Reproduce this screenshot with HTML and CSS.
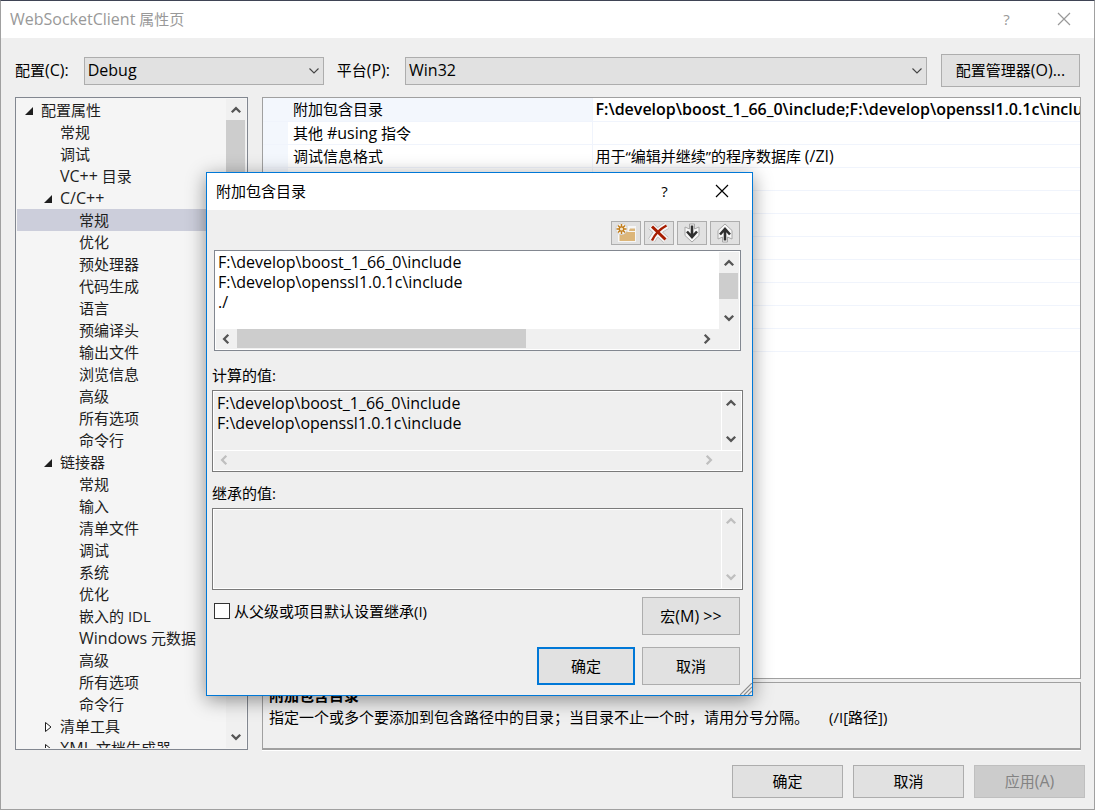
FILE: index.html
```html
<!DOCTYPE html>
<html lang="zh-CN">
<head>
<meta charset="utf-8">
<title>WebSocketClient 属性页</title>
<link rel="stylesheet" href="styles.css">
</head>
<body>
<svg class="defs" width="0" height="0" aria-hidden="true">
  <symbol id="i-up" viewBox="0 0 12 12"><path d="M1.800 8.300 6 4.100 10.200 8.300" fill="none" stroke="currentColor" stroke-width="2.300"/></symbol>
  <symbol id="i-down" viewBox="0 0 12 12"><path d="M1.800 3.700 6 7.900 10.200 3.700" fill="none" stroke="currentColor" stroke-width="2.300"/></symbol>
  <symbol id="i-left" viewBox="0 0 12 12"><path d="M8.300 1.800 4.100 6 8.300 10.200" fill="none" stroke="currentColor" stroke-width="2.300"/></symbol>
  <symbol id="i-right" viewBox="0 0 12 12"><path d="M3.700 1.800 7.900 6 3.700 10.200" fill="none" stroke="currentColor" stroke-width="2.300"/></symbol>
  <symbol id="i-combo" viewBox="0 0 12 12"><path d="M1.500 3.500 6 8 10.500 3.500" fill="none" stroke="currentColor" stroke-width="1.100"/></symbol>
  <symbol id="i-close" viewBox="0 0 14 14"><path d="M1 1 13 13M13 1 1 13" fill="none" stroke="currentColor" stroke-width="1.200"/></symbol>
  <symbol id="i-open" viewBox="0 0 10 10"><path d="M9 1V9H1Z" fill="#1e1e1e"/></symbol>
  <symbol id="i-shut" viewBox="0 0 10 10"><path d="M2.500.500V9.500L8 5Z" fill="#fff" stroke="#1e1e1e"/></symbol>
</svg>
<main class="window">
  <header class="titlebar">
    <h1 class="title"><span class="latin">WebSocketClient</span> 属性页</h1>
    <button class="cap" aria-label="帮助">?</button>
    <button class="cap" aria-label="关闭"><svg width="14" height="14"><use href="#i-close"/></svg></button>
  </header>
  <div class="config">
    <label for="cfg">配置<span class="latin">(C):</span></label>
    <span class="combo combo-cfg"><select class="latin" id="cfg"><option>Debug</option></select><svg class="chev" width="12" height="12"><use href="#i-combo"/></svg></span>
    <label for="plat">平台<span class="latin">(P):</span></label>
    <span class="combo combo-plat"><select class="latin" id="plat"><option>Win32</option></select><svg class="chev" width="12" height="12"><use href="#i-combo"/></svg></span>
    <button class="btn btn-mgr">配置管理器<span class="latin">(O)...</span></button>
  </div>
  <div class="panes">
    <nav class="tree">
      <ul class="items">
        <li class="l0"><svg class="tw" width="10" height="10"><use href="#i-open"/></svg>配置属性</li>
        <li class="l1">常规</li>
        <li class="l1">调试</li>
        <li class="l1"><span class="latin">VC++</span> 目录</li>
        <li class="l1"><svg class="tw" width="10" height="10"><use href="#i-open"/></svg><span class="latin">C/C++</span></li>
        <li class="l2 selected">常规</li>
        <li class="l2">优化</li>
        <li class="l2">预处理器</li>
        <li class="l2">代码生成</li>
        <li class="l2">语言</li>
        <li class="l2">预编译头</li>
        <li class="l2">输出文件</li>
        <li class="l2">浏览信息</li>
        <li class="l2">高级</li>
        <li class="l2">所有选项</li>
        <li class="l2">命令行</li>
        <li class="l1"><svg class="tw" width="10" height="10"><use href="#i-open"/></svg>链接器</li>
        <li class="l2">常规</li>
        <li class="l2">输入</li>
        <li class="l2">清单文件</li>
        <li class="l2">调试</li>
        <li class="l2">系统</li>
        <li class="l2">优化</li>
        <li class="l2">嵌入的 IDL</li>
        <li class="l2"><span class="latin">Windows</span> 元数据</li>
        <li class="l2">高级</li>
        <li class="l2">所有选项</li>
        <li class="l2">命令行</li>
        <li class="l1"><svg class="tw" width="10" height="10"><use href="#i-shut"/></svg>清单工具</li>
        <li class="l1"><svg class="tw" width="10" height="10"><use href="#i-shut"/></svg><span class="latin">XML</span> 文档生成器</li>
      </ul>
      <div class="vbar">
        <svg class="arrow" width="12" height="12"><use href="#i-up"/></svg>
        <span class="track"><span class="thumb thumb-tree"></span></span>
        <svg class="arrow" width="12" height="12"><use href="#i-down"/></svg>
      </div>
    </nav>
    <section class="detail">
      <div class="props">
        <table class="grid">
          <colgroup><col class="c-gut"><col class="c-name"><col></colgroup>
          <tr class="current"><td></td><th>附加包含目录</th><td><b class="latin">F:\develop\boost_1_66_0\include;F:\develop\openssl1.0.1c\include;./</b></td></tr>
          <tr><td></td><th>其他 <span class="latin">#using</span> 指令</th><td></td></tr>
          <tr><td></td><th>调试信息格式</th><td>用于“编辑并继续”的程序数据库 <span class="latin">(/ZI)</span></td></tr>
          <tr><td></td><th></th><td></td></tr>
          <tr><td></td><th></th><td></td></tr>
          <tr><td></td><th></th><td></td></tr>
          <tr><td></td><th></th><td></td></tr>
          <tr><td></td><th></th><td></td></tr>
          <tr><td></td><th></th><td></td></tr>
          <tr><td></td><th></th><td></td></tr>
          <tr><td></td><th></th><td></td></tr>
        </table>
      </div>
      <div class="help">
        <h2 class="help-title">附加包含目录</h2>
        <p class="help-text">指定一个或多个要添加到包含路径中的目录；当目录不止一个时，请用分号分隔。<span class="switch">(/I[路径])</span></p>
      </div>
    </section>
  </div>
  <footer class="actions">
    <button class="btn">确定</button>
    <button class="btn">取消</button>
    <button class="btn" disabled>应用<span class="latin">(A)</span></button>
  </footer>

  <section class="dialog" role="dialog" aria-labelledby="dlg">
    <header class="titlebar dlg-bar">
      <h2 class="title" id="dlg">附加包含目录</h2>
      <button class="cap" aria-label="帮助">?</button>
      <button class="cap" aria-label="关闭"><svg width="14" height="14"><use href="#i-close"/></svg></button>
    </header>
    <div class="dlg-body">
      <div class="tools">
        <button class="tool" aria-label="新行"><svg width="22" height="20" viewBox="0 0 22 20"><path d="M3 6h9l1-3h8v16H3z" fill="#f6f6f6"/><path d="M4.500 8.500h9l1.500-3h5V18H4.500z" fill="#dcb67a"/><path d="M12.500 8.500h7.500" stroke="#f6f6f6"/><circle cx="6.500" cy="6" r="5.700" fill="#f6f6f6" stroke="#c4c4c4" stroke-width=".600"/><path d="M6.500 1v10M1.500 6h10M3 2.500l7 7M10 2.500l-7 7" stroke="#c27d1a" stroke-width="1.500"/><circle cx="6.500" cy="6" r="2.200" fill="#f6e6cc" stroke="#c27d1a" stroke-width="1.200"/></svg></button>
        <button class="tool" aria-label="删除"><svg width="22" height="20" viewBox="0 0 22 20"><path d="M3 3 18 17M19 2.500C12 6 7 11 3.500 17.500" fill="none" stroke="#b8b8b8" stroke-width="7.400"/><path d="M3 3 18 17M19 2.500C12 6 7 11 3.500 17.500" fill="none" stroke="#f7f7f7" stroke-width="6"/><path d="M4 3.500 17.500 16.500" stroke="#a71d00" stroke-width="3"/><path d="M18.500 2.500C12 6 7 11 4 17.500" fill="none" stroke="#a71d00" stroke-width="2.400"/></svg></button>
        <button class="tool" aria-label="下移"><svg width="22" height="20" viewBox="0 0 22 20"><path d="M8.500 1h5v5l4.500-2v8.500L11 19l-7-6.500V4l4.500 2z" fill="#f8f8f8" stroke="#a8a8a8"/><path d="M11 2.500v12M6 8.500 11 14l5-5.500" fill="none" stroke="#303030" stroke-width="2.600"/></svg></button>
        <button class="tool" aria-label="上移"><svg width="22" height="20" viewBox="0 0 22 20"><path d="M8.500 19h5v-5l4.500 2V7.500L11 1 4 7.500V16l4.500-2z" fill="#f8f8f8" stroke="#a8a8a8"/><path d="M11 17.500v-12M6 11.500 11 6l5 5.500" fill="none" stroke="#303030" stroke-width="2.600"/></svg></button>
      </div>
      <div class="box box-edit">
        <textarea class="text latin" aria-label="附加包含目录" wrap="off">F:\develop\boost_1_66_0\include
F:\develop\openssl1.0.1c\include
./</textarea>
        <div class="vbar">
          <svg class="arrow" width="12" height="12"><use href="#i-up"/></svg>
          <span class="track"><span class="thumb thumb-edit"></span></span>
          <svg class="arrow" width="12" height="12"><use href="#i-down"/></svg>
        </div>
        <div class="hbar">
          <svg class="arrow" width="12" height="12"><use href="#i-left"/></svg>
          <span class="track"><span class="thumb thumb-wide"></span></span>
          <svg class="arrow" width="12" height="12"><use href="#i-right"/></svg>
        </div>
      </div>
      <label class="caption" for="calc">计算的值:</label>
      <div class="box box-read">
        <textarea class="text latin" id="calc" readonly wrap="off">F:\develop\boost_1_66_0\include
F:\develop\openssl1.0.1c\include</textarea>
        <div class="vbar">
          <svg class="arrow" width="12" height="12"><use href="#i-up"/></svg>
          <span class="track"></span>
          <svg class="arrow" width="12" height="12"><use href="#i-down"/></svg>
        </div>
        <div class="hbar off">
          <svg class="arrow" width="12" height="12"><use href="#i-left"/></svg>
          <span class="track"></span>
          <svg class="arrow" width="12" height="12"><use href="#i-right"/></svg>
        </div>
      </div>
      <label class="caption" for="inh">继承的值:</label>
      <div class="box box-read">
        <textarea class="text" id="inh" readonly></textarea>
        <div class="vbar off">
          <svg class="arrow" width="12" height="12"><use href="#i-up"/></svg>
          <span class="track"></span>
          <svg class="arrow" width="12" height="12"><use href="#i-down"/></svg>
        </div>
      </div>
      <div class="row row-inherit">
        <label class="check"><input type="checkbox">从父级或项目默认设置继承(I)</label>
        <button class="btn btn-dlg">宏<span class="latin">(M) &gt;&gt;</span></button>
      </div>
      <div class="row row-end">
        <button class="btn btn-dlg primary">确定</button>
        <button class="btn btn-dlg">取消</button>
      </div>
    </div>
    <svg class="grip" width="12" height="12" viewBox="0 0 12 12"><path d="M0 12 12 0M4 12 12 4M8 12 12 8" stroke="#8c8c8c" stroke-width="1.200"/></svg>
  </section>
</main>
</body>
</html>
```
FILE: styles.css
```css
* { box-sizing: border-box; }

body {
  margin: 0;
  font: 15px/20px "Open Sans", "Noto Sans CJK SC", sans-serif;
  color: #000;
  background: #efefef;
}

h1, h2, p, ul { margin: 0; padding: 0; font-size: inherit; }
button, select, textarea, input { font: inherit; color: inherit; margin: 0; }

.defs { position: absolute; }
.latin { font-size: 16px; }
b.latin { font-weight: 600; }

.window {
  position: relative;
  display: flex;
  flex-direction: column;
  height: 100vh;
  min-height: 720px;
  border: 1px solid #a0a0a0;
  border-top-color: #3f4455;
  background: #efefef;
}

.titlebar {
  display: flex;
  align-items: center;
  height: 37px;
  flex: none;
  padding: 0 2px 1px 0;
  background: #fff;
  color: #999;
}
.title { flex: 1; padding-left: 9px; font-weight: 400; }
.cap {
  display: flex;
  align-items: center;
  justify-content: center;
  width: 57px;
  height: 36px;
  padding: 0;
  border: 0;
  background: none;
}

.config {
  display: flex;
  align-items: center;
  flex: none;
  padding: 16px 14px 0;
}
.config label { padding-bottom: 1px; }
.combo { position: relative; display: flex; height: 28px; }
.combo select {
  width: 100%;
  appearance: none;
  padding: 0 3px 2px;
  border: 1px solid #adadad;
  border-radius: 0;
  background: #e1e1e1;
}
.chev { position: absolute; right: 4px; top: 8px; color: #444; pointer-events: none; }
.combo-cfg { width: 240px; margin: 0 13px 0 15px; }
.combo-plat { flex: 1; margin: 0 14px 0 15px; }

.btn {
  width: 111px;
  height: 33px;
  padding: 0 0 2px;
  border: 1px solid #adadad;
  background: #e1e1e1;
}
.btn:disabled { background: #ccc; border-color: #bfbfbf; color: #838383; }
.btn-mgr { width: 139px; }
.btn-dlg { width: 98px; height: 38px; padding: 0; }
.primary { border: 2px solid #0078d7; }

.panes {
  display: flex;
  flex: 1;
  gap: 14px;
  min-height: 0;
  padding: 10px 13px 0 14px;
}

.tree {
  display: flex;
  width: 233px;
  padding: 1px;
  border: 1px solid #828790;
  background: #f5f5f5;
  color: #1e1e1e;
}
.items { flex: 1; overflow: hidden; list-style: none; white-space: nowrap; }
.items li { height: 22px; line-height: 22px; }
.items .l0 { padding-left: 24px; }
.items .l1 { padding-left: 43px; }
.items .l2 { padding-left: 62px; }
.items .selected { background: #cccedb; }
.tw { margin: 0 7px 0 -17px; }

.vbar, .hbar { display: flex; align-items: center; background: #f0f0f0; color: #555; }
.vbar { flex-direction: column; width: 20px; padding: 5px 1px; }
.hbar { height: 20px; padding: 0 4px 1px; }
.off { color: #bfbfbf; }
.arrow { flex: none; }
.track { display: flex; flex: 1; }
.vbar .track { flex-direction: column; width: 100%; padding: 4px 0; }
.hbar .track { height: 100%; padding: 0 5px; }
.thumb { display: block; background: #cdcdcd; }
.thumb-tree { height: 120px; }
.thumb-edit { height: 26px; }
.thumb-wide { width: 289px; }
.vbar { padding-left: 0; }

.detail { display: flex; flex: 1; flex-direction: column; gap: 3px; min-width: 0; }
.props { flex: 1; overflow: hidden; border: 1px solid #a0a0a0; background: #fff; }
.grid { width: 100%; table-layout: fixed; border-collapse: collapse; }
.c-gut { width: 25px; }
.c-name { width: 304px; }
.grid tr { height: 23px; }
.grid th, .grid td {
  height: 23px;
  padding: 0 3px;
  border-bottom: 1px solid #f0f4fc;
  font-weight: 400;
  line-height: 22px;
  text-align: left;
  white-space: nowrap;
  overflow: hidden;
}
.grid td:last-child { padding-right: 0; }
.grid th { padding-left: 5px; border-right: 1px solid #f0f4fc; }
.grid td:first-child, .grid .current th { background: #f3f7fd; }

.help {
  height: 68px;
  padding: 2px 6px;
  border: 1px solid #a0a0a0;
  border-bottom-width: 2px;
  box-shadow: 0 1px #fff;
}
.help-title { font-weight: 700; }
.help-text { padding-top: 2px; white-space: nowrap; }
.switch { margin-left: 20px; }

.actions { display: flex; justify-content: flex-end; flex: none; gap: 10px; padding: 15px 9px 11px; }

.dialog {
  position: absolute;
  left: 205px;
  top: 171px;
  width: 547px;
  border: 1px solid #0078d7;
  background: #efefef;
  box-shadow: 0 4px 18px rgba(0, 0, 0, .42);
}
.dlg-bar { color: #000; }
.dlg-body { display: flex; flex-direction: column; padding: 11px 9px 10px 5px; }
.tools { display: flex; justify-content: flex-end; gap: 3px; padding-right: 3px; }
.tool {
  display: flex;
  align-items: center;
  justify-content: center;
  width: 30px;
  height: 24px;
  padding: 0;
  border: 1px solid #adadad;
  background: #e1e1e1;
}
.box {
  display: grid;
  grid-template-columns: 1fr 20px;
  grid-template-rows: 1fr auto;
  padding: 1px;
  background: #fff;
}
.box-edit { height: 101px; margin: 5px 2px 0; border: 1px solid #828790; }
.box-read { height: 82px; border: 1px solid #7a7a7a; }
.box-edit .hbar { grid-column: 1 / 3; padding-right: 26px; }
.text {
  width: 100%;
  height: 100%;
  padding: 0 2px;
  border: 0;
  outline: 0;
  resize: none;
  overflow: hidden;
  background: #fff;
}
.box-read .text, .box-read .vbar, .box-read .hbar { background: #efefef; }
.box-read .text { padding: 1px 3px; }
.box-read .vbar { border-left: 1px solid #fff; }
.box-read .hbar { grid-column: 1 / 3; border-top: 1px solid #fff; padding-right: 26px; }
.caption { margin: 14px 0 5px; }
.box-read + .caption { margin-top: 11px; }
.row { display: flex; justify-content: space-between; padding-right: 3px; }
.row-inherit { padding-top: 7px; }
.row-end { justify-content: flex-end; gap: 7px; padding-top: 12px; }
.check { display: flex; align-items: center; gap: 4px; height: 28px; padding-left: 2px; }
.check input { appearance: none; width: 16px; height: 16px; border: 1px solid #333; background: #fff; }
.grip { position: absolute; right: 0; bottom: 0; }
```
